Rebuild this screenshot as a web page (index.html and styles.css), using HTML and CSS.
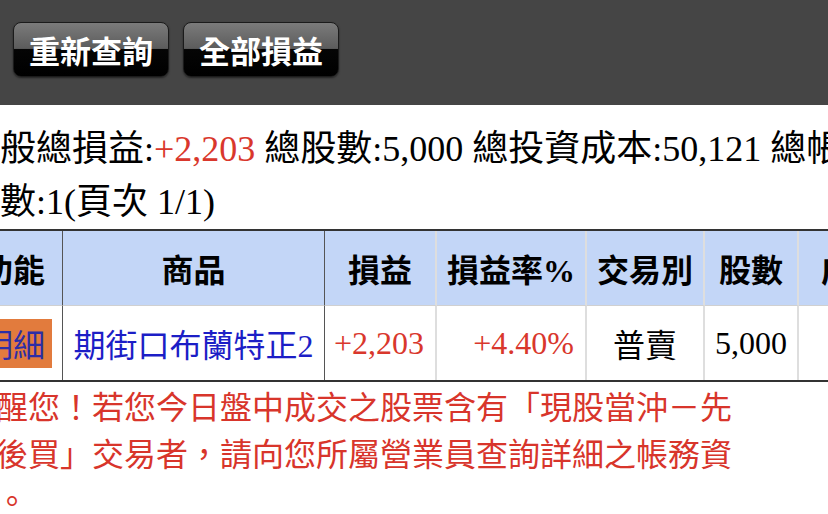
FILE: index.html
```html
<!DOCTYPE html>
<html lang="zh-Hant">
<head>
<meta charset="utf-8">
<title>損益查詢</title>
<link rel="stylesheet" href="styles.css">
</head>
<body>
<header class="toolbar">
  <button class="btn" type="button">重新查詢</button>
  <button class="btn" type="button">全部損益</button>
</header>
<main class="page">
  <div class="summary">
    <div class="summary-line">一般總損益:<span class="pos">+2,203</span> 總股數:5,000 總投資成本:50,121 總帳面價值</div>
    <div class="summary-line">筆數:1(頁次 1/1)</div>
  </div>
  <table class="grid">
    <colgroup>
      <col class="c-func"><col class="c-prod"><col class="c-pl"><col class="c-rate"><col class="c-type"><col class="c-qty"><col class="c-cost">
    </colgroup>
    <thead>
      <tr>
        <th class="dark">功能</th>
        <th class="dark">商品</th>
        <th>損益</th>
        <th>損益率%</th>
        <th>交易別</th>
        <th>股數</th>
        <th>成本</th>
      </tr>
    </thead>
    <tbody>
      <tr>
        <td class="dark center"><span class="detail">明細</span></td>
        <td class="dark center"><span class="link">期街口布蘭特正2</span></td>
        <td class="num pos">+2,203</td>
        <td class="num pos">+4.40%</td>
        <td class="center">普賣</td>
        <td class="center">5,000</td>
        <td class="center"></td>
      </tr>
    </tbody>
  </table>
  <p class="notice">提醒您！若您今日盤中成交之股票含有「現股當沖－先賣後買」交易者，請向您所屬營業員查詢詳細之帳務資料。</p>
</main>
</body>
</html>
```
FILE: styles.css
```css
html, body {
  margin: 0;
  padding: 0;
  overflow: hidden;
  background: #ffffff;
}

body {
  font-family: "Liberation Serif", "Noto Sans CJK TC", serif;
  color: #000;
}

.toolbar {
  background: #454545;
  height: 105px;
  box-sizing: border-box;
  padding: 22px 0 0 13px;
  display: flex;
  gap: 14px;
  align-items: flex-start;
}

.btn {
  height: 55px;
  padding: 0 15px;
  margin: 0;
  border: 1px solid #1b1b1b;
  border-radius: 8px;
  background: linear-gradient(to bottom, #7b7b7b 0%, #5c5c5c 48%, #050505 50%, #000 100%);
  color: #fff;
  font-family: "Noto Sans CJK TC", sans-serif;
  font-weight: bold;
  font-size: 31px;
  line-height: 1;
  box-shadow: 0 1px 2px rgba(0, 0, 0, 0.5);
}

.page {
  margin-left: -36px;
  width: 1000px;
}

.summary {
  margin-top: 18px;
  font-size: 36px;
  line-height: 53px;
}

.summary-line {
  white-space: nowrap;
}

.pos {
  color: #d9372c;
}

.grid {
  border-collapse: separate;
  border-spacing: 0;
  table-layout: fixed;
  width: 945px;
  border-top: 2px solid #333;
  border-bottom: 2px solid #333;
  font-size: 32px;
}

.c-func { width: 99px; }
.c-prod { width: 262px; }
.c-pl { width: 112px; }
.c-rate { width: 150px; }
.c-type { width: 118px; }
.c-qty { width: 94px; }
.c-cost { width: 110px; }

.grid th,
.grid td {
  padding: 0;
  border-right: 2px solid #dedede;
  vertical-align: middle;
  white-space: nowrap;
}

.grid th {
  height: 74px;
  background: #c3d6f7;
  font-weight: bold;
  border-bottom: 1px solid #d0d0d0;
}

.grid td {
  height: 74px;
}

.grid .dark {
  border-right: 1px solid #555;
}

.center {
  text-align: center;
}

.num {
  text-align: right;
  padding-right: 11px !important;
}

.detail {
  display: inline-block;
  background: #e27b3d;
  color: #2d2ea6;
  font-family: "Noto Sans CJK TC", sans-serif;
  height: 49px;
  line-height: 49px;
  padding: 0 7px;
}

.link {
  color: #1c1ec6;
}

.notice {
  margin: 0;
  width: 780px;
  color: #d8352b;
  font-family: "Noto Sans CJK TC", sans-serif;
  font-size: 32px;
  line-height: 47px;
}
```
